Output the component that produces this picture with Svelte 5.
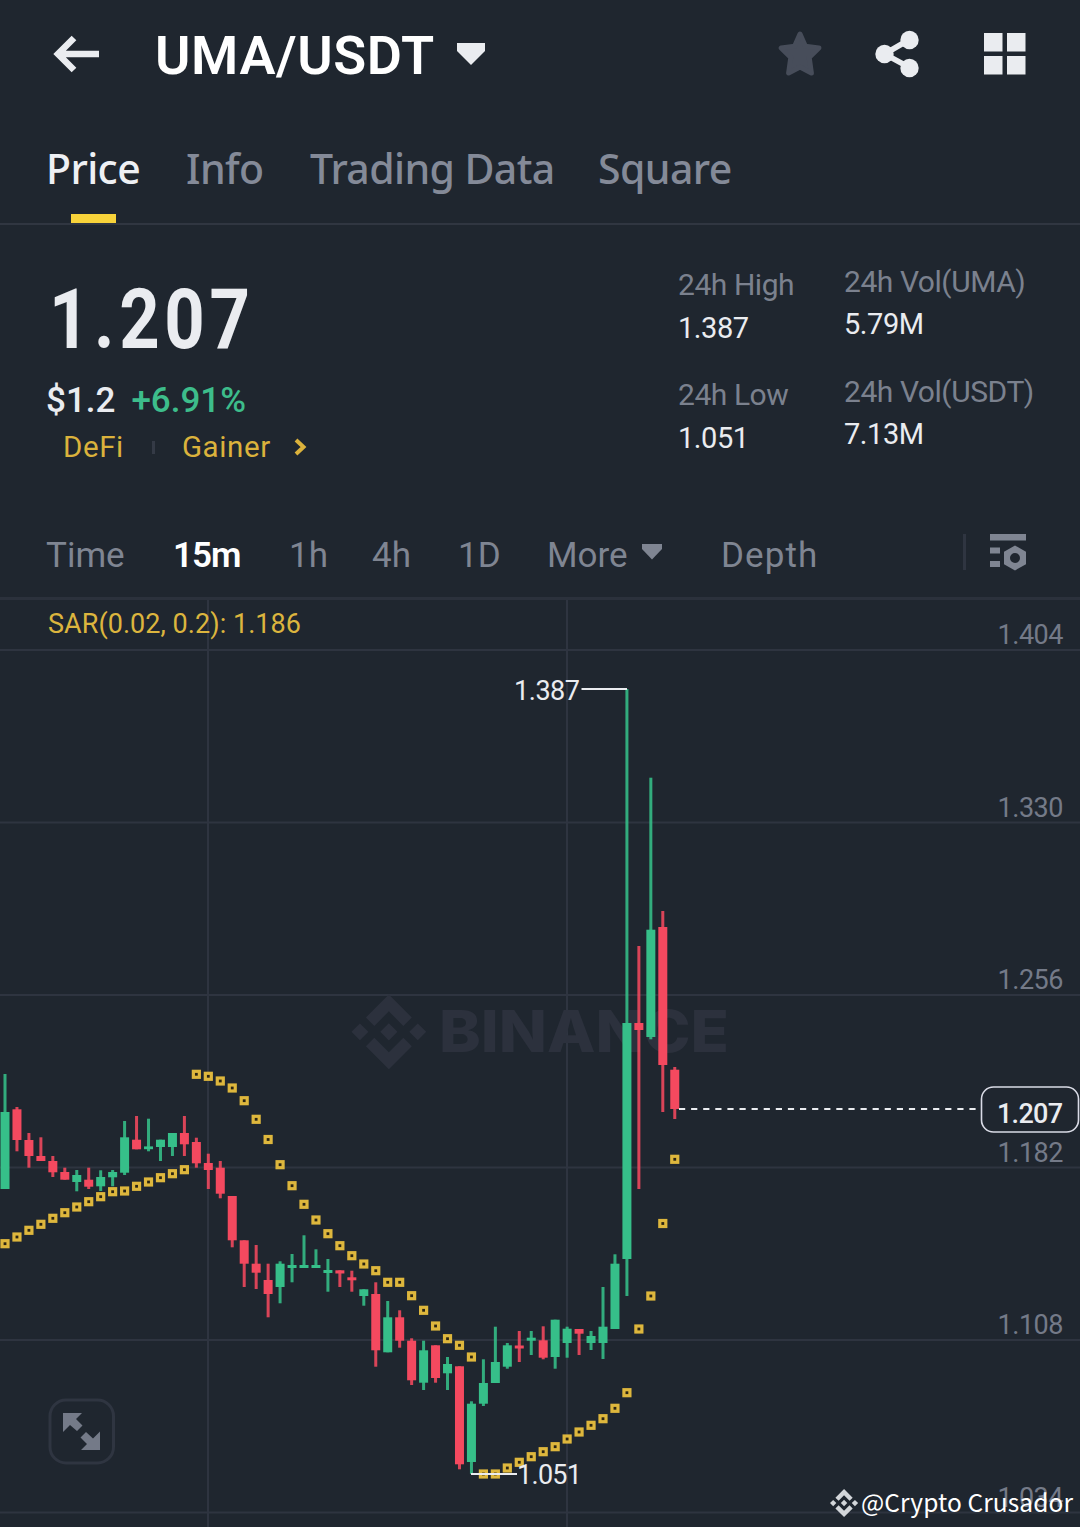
<script lang="ts">
  /** Market detail page for one trading pair: header, tabs, 24h summary,
   *  interval picker and the candlestick chart with Parabolic SAR. */
  const TABS = ['Price', 'Info', 'Trading Data', 'Square'];
  const INTERVALS = ['Time', '15m', '1h', '4h', '1D'];

  const STATS = [
    [
      { label: '24h High', value: '1.387' },
      { label: '24h Low', value: '1.051' },
    ],
    [
      { label: '24h Vol(UMA)', value: '5.79M' },
      { label: '24h Vol(USDT)', value: '7.13M' },
    ],
  ];

  let tab = $state('Price');
  let interval = $state('15m');

  const STEP = 11.96;
  const x = (i: number) => 5 + i * STEP;

  const GRID = [
    { y: 650, price: '1.404' },
    { y: 822.5, price: '1.330' },
    { y: 995, price: '1.256' },
    { y: 1167.5, price: '1.182' },
    { y: 1340, price: '1.108' },
    { y: 1512.5, price: '1.034' },
  ];

  // direction, wick top, body top, body bottom, wick bottom
  const CANDLES: [string, number, number, number, number][] = [
    ['up', 1074, 1112, 1189, 1189],
    ['down', 1107, 1109.3, 1140, 1151.3],
    ['down', 1133, 1140, 1156, 1167.7],
    ['down', 1137.3, 1156, 1161, 1161],
    ['down', 1156, 1161, 1172.3, 1177],
    ['down', 1167.7, 1172, 1179.7, 1179.7],
    ['up', 1170, 1175, 1182, 1191.3],
    ['down', 1167.7, 1179.7, 1186.7, 1189],
    ['up', 1170.3, 1177, 1186.3, 1191],
    ['up', 1170, 1172, 1177.3, 1186.3],
    ['up', 1121, 1137.3, 1172.7, 1175],
    ['down', 1116, 1139.7, 1149.3, 1149.3],
    ['up', 1118.7, 1146.4, 1149.2, 1151.3],
    ['up', 1139.7, 1139.7, 1147, 1161],
    ['up', 1133, 1133, 1147, 1156],
    ['down', 1116, 1133, 1144.3, 1156],
    ['down', 1137.7, 1142, 1163.3, 1167.7],
    ['down', 1153.7, 1163, 1170, 1189],
    ['down', 1161, 1167.7, 1193.7, 1198.3],
    ['down', 1196, 1196, 1240.3, 1247.3],
    ['down', 1240.3, 1240.3, 1263.7, 1287],
    ['down', 1245, 1263.7, 1272.7, 1289],
    ['down', 1263.7, 1280, 1294, 1317.3],
    ['up', 1261.3, 1263.7, 1287, 1303.3],
    ['up', 1254, 1265, 1268, 1282.3],
    ['up', 1235.3, 1265, 1268, 1268],
    ['up', 1249.3, 1265, 1268, 1268],
    ['up', 1259, 1270, 1273, 1291.7],
    ['down', 1270.3, 1270.3, 1273.5, 1287],
    ['down', 1270.7, 1277.3, 1280.3, 1291.7],
    ['up', 1289.3, 1289.3, 1296, 1305.7],
    ['down', 1282.3, 1294, 1350.3, 1366.7],
    ['up', 1301, 1317.3, 1352.3, 1352.3],
    ['down', 1310.3, 1317.3, 1340.7, 1347.7],
    ['down', 1338.3, 1340.7, 1380.3, 1385],
    ['up', 1340.7, 1350.3, 1382.7, 1390],
    ['down', 1345.3, 1345.3, 1378, 1382.7],
    ['up', 1357, 1364, 1373.3, 1390],
    ['down', 1366.3, 1366.3, 1464.3, 1469.3],
    ['up', 1401.3, 1403.7, 1462, 1474],
    ['up', 1359.3, 1383, 1403.7, 1406],
    ['up', 1326.7, 1362, 1383, 1383],
    ['up', 1343, 1345.3, 1366.7, 1368.7],
    ['down', 1331, 1345.5, 1348.5, 1362],
    ['up', 1331, 1337.7, 1340.7, 1355],
    ['down', 1326.3, 1340.3, 1357.7, 1359.3],
    ['up', 1319.7, 1319.7, 1357, 1368.7],
    ['up', 1326.7, 1328.7, 1343, 1357.7],
    ['down', 1329, 1329, 1333.7, 1355],
    ['up', 1331, 1336, 1343, 1350],
    ['up', 1287, 1326.7, 1343, 1359],
    ['up', 1254.3, 1263.7, 1329, 1329],
    ['up', 689, 1023, 1259, 1296],
    ['down', 946, 1023, 1030, 1189],
    ['up', 777.7, 929.7, 1037, 1039.3],
    ['down', 911, 927, 1065, 1112],
    ['down', 1067, 1069.7, 1109, 1119],
  ];

  const SAR = [
    1243.7, 1237, 1230.3, 1224.3, 1218.3, 1212.7, 1207, 1201.7, 1196.7, 1191.7, 1191, 1186.3,
    1182, 1177.7, 1173.7, 1169.7, 1074.3, 1076.3, 1081, 1088, 1100.7, 1119.3, 1139.5, 1164.7,
    1185.7, 1204.3, 1220, 1233.7, 1245.7, 1255.7, 1264, 1270.7, 1282.3, 1282.3, 1295.7, 1310.3,
    1326, 1338.7, 1345.3, 1357, 1474, 1474, 1468, 1462.3, 1456.7, 1451.7, 1446.7, 1439, 1432,
    1425.3, 1418.7, 1408.3, 1392.7, 1329, 1296, 1223.5, 1159.3,
  ];
</script>

{#snippet logo()}
  <path
    d="M38.7 53.2 63.3 28.6l24.6 24.6 14.3-14.3L63.3 0 24.4 38.9zM0 63.3 14.3 49l14.3 14.3-14.3 14.3zM38.7 73.4 63.3 98l24.6-24.6 14.3 14.3-38.9 38.9-38.9-38.9zM98 63.3 112.3 49l14.3 14.3-14.3 14.3zM77.8 63.3 63.3 48.8 48.8 63.3l14.5 14.5z"
  />
{/snippet}

<div class="page">
  <header class="top">
    <svg class="back" width="48" height="40" viewBox="0 0 48 40">
      <path d="M5 20h42M22 4 6 20l16 16" fill="none" stroke="currentColor" stroke-width="6.6" />
    </svg>
    <h1 class="pair">UMA/USDT</h1>
    <svg class="caret" width="30" height="22" viewBox="0 0 30 22">
      <path d="M1 0h28v8L15 22 1 8z" fill="currentColor" />
    </svg>
    <div class="actions">
      <svg width="48" height="48" viewBox="0 0 48 48">
        <path
          d="m24 4 5.4 12.3 13.5 1.6-9.7 9.5 2.2 15.6L24 37.1 12.6 43l2.2-15.6-9.7-9.5 13.5-1.6z"
          fill="#474d5a"
          stroke="#474d5a"
          stroke-width="5"
          stroke-linejoin="round"
        />
      </svg>
      <svg width="48" height="48" viewBox="0 0 48 48">
        <path d="M36.5 9.5 11.5 24l25 13.5" fill="none" stroke="#eaecf0" stroke-width="5.5" />
        <g fill="#eaecf0">
          <circle cx="11.5" cy="24" r="9.2" />
          <circle cx="36.5" cy="10" r="9.2" />
          <circle cx="36.5" cy="38" r="9.2" />
        </g>
      </svg>
      <svg width="42" height="42" viewBox="0 0 42 42">
        <path d="M0 0h18.5v18.5H0zM23 0h18.5v18.5H23zM0 23h18.5v18.5H0zM23 23h18.5v18.5H23z" fill="#eaecf0" />
      </svg>
    </div>
  </header>

  <nav class="tabs">
    {#each TABS as t}
      <button class="tab" class:active={tab === t} onclick={() => (tab = t)}>{t}</button>
    {/each}
  </nav>

  <section class="summary">
    <div class="quote">
      <div class="last">1.207</div>
      <div class="change">
        <span class="usd">$1.2</span>
        <span class="pct">+6.91%</span>
      </div>
      <div class="tags">
        <span>DeFi</span>
        <i class="sep"></i>
        <span>Gainer</span>
        <svg width="14" height="18" viewBox="0 0 14 18">
          <path d="m2 2 7.5 7L2 16" fill="none" stroke="currentColor" stroke-width="4" />
        </svg>
      </div>
    </div>
    {#each STATS as col}
      <dl class="stats">
        {#each col as s}
          <dt>{s.label}</dt>
          <dd>{s.value}</dd>
        {/each}
      </dl>
    {/each}
  </section>

  <div class="intervals">
    {#each INTERVALS as t}
      <button class="int" class:active={interval === t} onclick={() => (interval = t)}>{t}</button>
    {/each}
    <button class="int more">
      More
      <svg width="20" height="16" viewBox="0 0 20 16">
        <path d="M0 0h20v5L10 15.5 0 5z" fill="currentColor" />
      </svg>
    </button>
    <button class="int depth">Depth</button>
    <i class="rule"></i>
    <svg class="settings" width="37" height="37" viewBox="0 0 37 37">
      <path d="M0 0h36v6.5H0zM0 13.5h10v6H0zM0 27h10v6H0z" fill="currentColor" />
      <path
        d="m25 11.5 11 6.2v12.5l-11 6.2-11-6.2V17.7zM25 19a5 5 0 1 0 0 10 5 5 0 0 0 0-10z"
        fill="currentColor"
        fill-rule="evenodd"
      />
    </svg>
  </div>

  <svg class="chart" width="1080" height="927" viewBox="0 600 1080 927">
    <g class="grid">
      {#each GRID as g}
        <line x1="0" x2="1080" y1={g.y} y2={g.y} />
      {/each}
      <line x1="208" x2="208" y1="600" y2="1527" />
      <line x1="567" x2="567" y1="600" y2="1527" />
    </g>

    <g class="brand">
      <g transform="translate(351.5 994.5) scale(.59)">{@render logo()}</g>
      <text x="439" y="1052" textLength="290" lengthAdjust="spacingAndGlyphs">BINANCE</text>
    </g>

    <g class="axis">
      {#each GRID as g}
        <text x="997.5" y={g.y - 6} textLength="66">{g.price}</text>
      {/each}
    </g>

    {#each CANDLES as [dir, high, top, bottom, low], i}
      <g class={dir}>
        <rect class="wick" x={x(i) - 1.5} y={high} width="3" height={low - high} />
        <rect x={x(i) - 4.5} y={top} width="9" height={bottom - top} />
      </g>
    {/each}

    <g class="sar">
      {#each SAR as y, i}
        <rect x={x(i) - 3} y={y - 3} width="6" height="6" />
      {/each}
    </g>

    <text class="legend" x="48" y="633" textLength="253">SAR(0.02, 0.2): 1.186</text>

    <g class="marks">
      <line x1="581.5" x2="627" y1="689" y2="689" />
      <text x="514" y="700" textLength="66">1.387</text>
      <line x1="471" x2="517" y1="1474" y2="1474" />
      <text x="517" y="1484" textLength="65">1.051</text>
      <line class="dash" x1="679" x2="977" y1="1109" y2="1109" />
      <rect x="981.5" y="1087" width="97" height="45" rx="12" />
      <text class="now" x="997" y="1123" textLength="66">1.207</text>
    </g>

    <g class="expand">
      <rect x="50" y="1400" width="63.5" height="63" rx="16" />
      <path d="M63 1413h19l-6 6 6.5 6.500-5.500 5.500-7-6-7 7zM100 1450H81l6-6-6.500-6.500 5.500-5.500 7 6.500 7-7z" />
    </g>

    <g class="author">
      <g transform="translate(830 1489) scale(.222)">{@render logo()}</g>
      <text x="861" y="1512" textLength="212">@Crypto Crusador</text>
    </g>
  </svg>
</div>

<style>
  :global(body) {
    margin: 0;
    background: #1f262f;
  }
  .page {
    width: 1080px;
    height: 1527px;
    overflow: hidden;
    background: #1f262f;
    color: #eaecf0;
    font-family: Roboto, 'Liberation Sans', sans-serif;
  }
  button {
    background: none;
    border: 0;
    padding: 0;
    font: inherit;
    color: inherit;
    text-align: left;
    white-space: nowrap;
    cursor: pointer;
  }
  svg {
    display: block;
    flex: none;
  }

  .top {
    display: flex;
    align-items: center;
    height: 108px;
    padding: 0 54px 0 52px;
  }
  .pair {
    width: 299px;
    margin: 3px 0 0 55px;
    font-size: 54px;
    line-height: 64px;
    font-weight: 600;
    letter-spacing: 0.6px;
    color: #fff;
  }
  .caret {
    margin-left: 2px;
  }
  .actions {
    display: flex;
    align-items: center;
    gap: 49px;
    margin-left: auto;
  }
  .actions svg:last-child {
    margin-left: 14px;
  }

  .tabs {
    display: grid;
    grid-template-columns: 140px 124px 288px 140px;
    height: 115px;
    padding-left: 46px;
    border-bottom: 2px solid #303641;
  }
  .tab {
    position: relative;
    justify-self: start;
    padding-top: 5px;
    font-family: 'Noto Sans', sans-serif;
    font-size: 41px;
    line-height: 110px;
    font-weight: 500;
    letter-spacing: -0.6px;
    color: #848a98;
  }
  .tab.active {
    color: #eef0f4;
  }
  .tab.active::after {
    content: '';
    position: absolute;
    left: calc(50% - 22px);
    bottom: 0;
    width: 45px;
    height: 9px;
    background: #f8d33a;
  }

  .summary {
    display: flex;
    height: 287px;
  }
  .quote {
    box-sizing: border-box;
    width: 678px;
    padding: 45px 0 0 46px;
  }
  .last {
    margin-left: 3px;
    font-size: 84px;
    line-height: 100px;
    font-weight: 700;
    letter-spacing: 5.5px;
    transform: scaleX(0.84);
    transform-origin: left;
  }
  .change {
    display: flex;
    gap: 16px;
    margin-top: 10px;
    font-size: 35px;
    line-height: 42px;
    font-weight: 500;
  }
  .pct {
    color: #3dbd8b;
  }
  .tags {
    display: flex;
    align-items: center;
    margin-top: 4px;
    padding-left: 17px;
    font-size: 29.5px;
    line-height: 42px;
    letter-spacing: 0.6px;
    color: #dbb23c;
  }
  .sep {
    width: 3px;
    height: 13px;
    margin: 0 27px 0 28px;
    background: #343a46;
  }
  .tags svg {
    margin-left: 23px;
  }
  .stats {
    width: 166px;
    margin: 39px 0 0;
    white-space: nowrap;
    font-size: 30px;
    line-height: 42px;
    letter-spacing: -0.45px;
  }
  .stats + .stats {
    margin-top: 36px;
  }
  .stats dt {
    color: #7b818e;
  }
  .stats dd {
    margin: 1px 0 25px;
    font-size: 29px;
    color: #eaecf0;
  }
  .stats + .stats dd {
    margin: 0 0 26px;
  }

  .intervals {
    display: grid;
    grid-template-columns: 127px 116px 83px 86px 89px 174px 242px 27px 40px;
    align-items: center;
    height: 88px;
    padding-left: 46px;
    border-bottom: 3px solid #2b313c;
    box-sizing: border-box;
    font-size: 35px;
    color: #7f8592;
  }
  .int {
    padding-top: 2px;
    line-height: 83px;
  }
  .int.active {
    font-weight: 600;
    letter-spacing: -1px;
    color: #fff;
  }
  .int.depth {
    letter-spacing: 1.1px;
  }
  .more {
    display: flex;
    align-items: center;
    gap: 14px;
  }
  .more svg {
    margin-top: -8px;
  }
  .rule {
    width: 3px;
    height: 36px;
    margin-top: -6px;
    background: #2f3541;
  }
  .settings {
    margin-top: -5px;
  }

  .chart {
    font-size: 27px;
  }
  .grid line {
    stroke: #2e3440;
    stroke-width: 2;
  }
  .brand {
    fill: #2c313d;
  }
  .brand text {
    font: 800 58px Inter, sans-serif;
  }
  .axis {
    fill: #747a88;
  }
  .up {
    fill: #36bf89;
  }
  .down {
    fill: #f4495f;
  }
  .wick {
    opacity: 0.88;
  }
  .sar {
    fill: #2b2412;
    stroke: #deb73d;
    stroke-width: 3.2;
  }
  .legend {
    fill: #dcb53e;
  }
  .marks {
    fill: #eaecf0;
  }
  .marks line {
    stroke: #eaecf0;
    stroke-width: 2;
  }
  .marks .dash {
    stroke-dasharray: 6.2 5.9;
  }
  .marks rect {
    fill: #1f262f;
    stroke: #d9dbe6;
    stroke-width: 1.6;
  }
  .now {
    font-weight: 500;
  }
  .expand rect {
    fill: none;
    stroke: #2f3541;
    stroke-width: 3;
  }
  .expand path {
    fill: #747a88;
  }
  .author {
    fill: #d3d6da;
  }
  .author text {
    font: 400 24.5px 'Noto Sans CJK SC', sans-serif;
    fill: #fff;
  }
</style>
